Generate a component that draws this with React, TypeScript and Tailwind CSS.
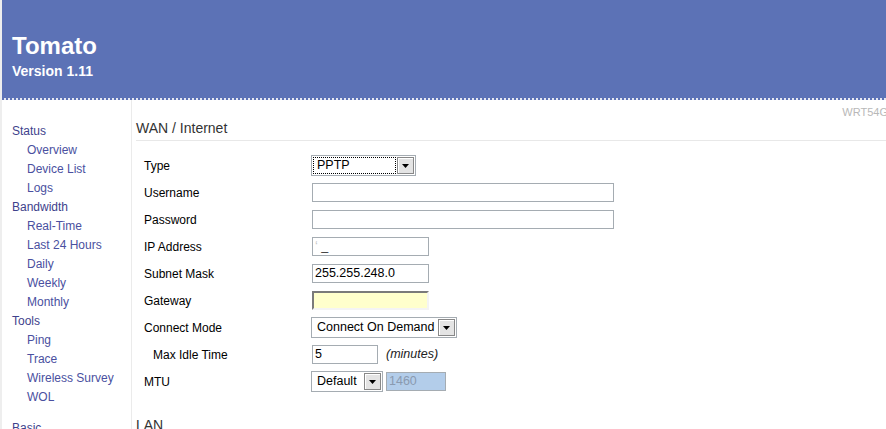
import React from "react";

type Item = { label: string; sub?: boolean };

const navItems: Item[] = [
  { label: "Status" },
  { label: "Overview", sub: true },
  { label: "Device List", sub: true },
  { label: "Logs", sub: true },
  { label: "Bandwidth" },
  { label: "Real-Time", sub: true },
  { label: "Last 24 Hours", sub: true },
  { label: "Daily", sub: true },
  { label: "Weekly", sub: true },
  { label: "Monthly", sub: true },
  { label: "Tools" },
  { label: "Ping", sub: true },
  { label: "Trace", sub: true },
  { label: "Wireless Survey", sub: true },
  { label: "WOL", sub: true },
];

function Arrow() {
  return (
    <svg width="7" height="4" viewBox="0 0 7 4">
      <path d="M0 0h7L3.5 4z" fill="#000" />
    </svg>
  );
}

function Select({ value, width, focus }: { value: string; width: string; focus?: boolean }) {
  return (
    <div className={`flex h-[21px] items-stretch border border-[#a5acb2] bg-white p-[1px] ${width}`}>
      <div className="flex flex-1 items-center pr-[1px]">
        <div
          className={`flex h-full w-full items-center pl-[3px] text-[12.5px] text-black ${
            focus ? "border border-dotted border-black" : "border border-transparent"
          }`}
        >
          {value}
        </div>
      </div>
      <div className="flex w-[17px] items-center justify-center border border-[#888] bg-[#e4e4e4] shadow-[inset_1px_1px_0_#fff]">
        <Arrow />
      </div>
    </div>
  );
}

function Input({ width, value, variant }: { width: string; value?: React.ReactNode; variant?: "gw" | "off" }) {
  let cls = "border border-[#a5acb2] bg-white text-black";
  if (variant === "gw") cls = "border-2 border-t-[#7a7a7a] border-l-[#7a7a7a] border-r-[#f4f4f4] border-b-[#f4f4f4] bg-[#ffffcc]";
  if (variant === "off") cls = "border border-[#a5acb2] bg-[#b3cdea] text-[#8a9ab0]";
  return (
    <div className={`flex h-[19px] items-center pl-[2px] text-[12.5px] ${width} ${cls}`}>{value}</div>
  );
}

function Row({ label, indent, children }: { label: string; indent?: boolean; children: React.ReactNode }) {
  return (
    <div className="flex h-[27px] items-center">
      <div className={`w-[168px] shrink-0 text-[12px] text-black ${indent ? "pl-[9px]" : ""}`}>{label}</div>
      <div className="flex items-center">{children}</div>
    </div>
  );
}

export default function App() {
  return (
    <div className="flex h-[429px] w-[886px] overflow-hidden bg-[#eeeeee] pl-[2px] font-['Liberation_Sans',Arial,sans-serif]">
      <div className="flex flex-1 flex-col bg-white">
        <div className="flex h-[100px] shrink-0 flex-col bg-[#5c72b6]">
          <div className="flex flex-1 flex-col pl-[10px] pt-[32px] font-bold text-white">
            <div className="text-[24px] leading-[28px]">Tomato</div>
            <div className="mt-[3px] text-[14px] leading-[16px]">Version 1.11</div>
          </div>
          <div className="h-[2px] bg-[repeating-linear-gradient(90deg,#5c72b6_0px,#5c72b6_2px,#e6e8f2_2px,#e6e8f2_4px)]" />
        </div>

        <div className="flex flex-1">
          <div className="w-[130px] shrink-0 border-r border-[#ebebeb] pl-[10px] pt-[22px] text-[12px] leading-[19px]">
            {navItems.map((it) => (
              <div key={it.label} className={it.sub ? "pl-[15px] text-[#4a50a0]" : "text-[#3e428c]"}>
                {it.label}
              </div>
            ))}
            <div className="mt-[12px] text-[#3e428c]">Basic</div>
          </div>

          <div className="flex flex-1 flex-col pl-[4px]">
            <div className="flex h-[20px] items-end justify-end pb-[1px] text-[11px] leading-[13px] text-[#b8b8b8]">
              <span className="mr-[-2px]">WRT54G</span>
            </div>
            <div className="border-b border-[#e8e8e8] pb-[4px] text-[14px] leading-[16px] text-[#333]">WAN / Internet</div>

            <div className="mt-[11px] pl-[8px]">
              <Row label="Type">
                <div className="-ml-[1px]">
                  <Select value="PPTP" width="w-[105px]" focus />
                </div>
              </Row>
              <Row label="Username">
                <Input width="w-[302px]" />
              </Row>
              <Row label="Password">
                <Input width="w-[302px]" />
              </Row>
              <Row label="IP Address">
                <Input
                  width="w-[117px]"
                  value={
                    <span className="text-[#c8c8c8]">
                      ‘ <span className="text-[#333]">_</span>
                    </span>
                  }
                />
              </Row>
              <Row label="Subnet Mask">
                <Input width="w-[117px]" value="255.255.248.0" />
              </Row>
              <Row label="Gateway">
                <Input width="w-[117px]" variant="gw" />
              </Row>
              <Row label="Connect Mode">
                <div className="-ml-[1px]">
                  <Select value="Connect On Demand" width="w-[146px]" />
                </div>
              </Row>
              <Row label="Max Idle Time" indent>
                <Input width="w-[66px]" value="5" />
                <span className="ml-[8px] text-[12.5px] italic text-[#222]">(minutes)</span>
              </Row>
              <Row label="MTU">
                <div className="-ml-[1px]">
                  <Select value="Default" width="w-[72px]" />
                </div>
                <div className="ml-[3px]">
                  <Input width="w-[60px]" value="1460" variant="off" />
                </div>
              </Row>
            </div>

            <div className="mt-[22px] text-[14px] leading-[16px] text-[#333]">LAN</div>
          </div>
        </div>
      </div>
    </div>
  );
}
